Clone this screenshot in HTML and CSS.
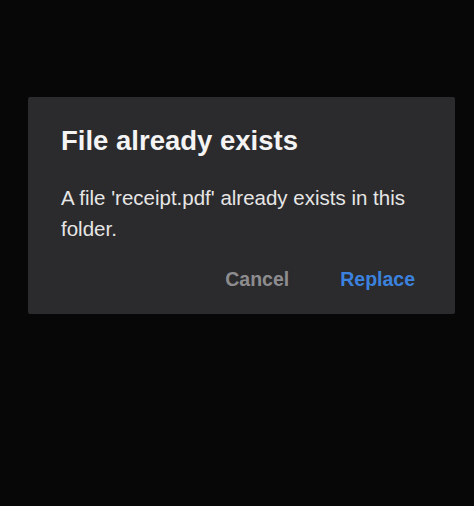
FILE: index.html
```html
<!DOCTYPE html>
<html>
<head>
<meta charset="utf-8">
<link rel="stylesheet" href="styles.css">
</head>
<body>
<div class="dialog">
  <h1 class="title">File already exists</h1>
  <p class="message">A file 'receipt.pdf' already exists in this folder.</p>
  <div class="actions">
    <button class="btn btn-cancel">Cancel</button>
    <button class="btn btn-replace">Replace</button>
  </div>
</div>
</body>
</html>
```

FILE: styles.css
```css
html, body {
  margin: 0;
  padding: 0;
  background: #080708;
}
body {
  font-family: "Liberation Sans", Arial, sans-serif;
  padding-top: 97px;
}
.dialog {
  margin-left: 28px;
  width: 427px;
  height: 217px;
  box-sizing: border-box;
  background: #2b2a2c;
  border-radius: 2px;
  padding: 28px 40px 0 33px;
}
.title {
  margin: 0;
  font-size: 27.5px;
  line-height: 32px;
  font-weight: 700;
  color: #f4f4f4;
}
.message {
  margin: 25px 0 0 0;
  font-size: 20.5px;
  line-height: 31px;
  color: #e6e6e6;
}
.actions {
  display: flex;
  justify-content: flex-end;
  gap: 51px;
  margin-top: 23px;
}
.btn {
  background: none;
  border: none;
  padding: 0;
  font-family: "Liberation Sans", Arial, sans-serif;
  font-size: 19.5px;
  font-weight: 700;
  line-height: 24px;
  cursor: pointer;
}
.btn-cancel { color: #8d8d8f; }
.btn-replace { color: #3b82de; }
```
